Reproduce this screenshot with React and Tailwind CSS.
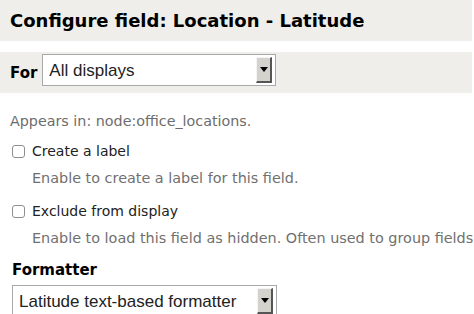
const SANS = { fontFamily: '"DejaVu Sans", Verdana, sans-serif' }

function SelectBox({ value, className }) {
  return (
    <div
      className={`flex items-center justify-between bg-white border border-[#a9a9a9] pl-[6px] pr-[3px] ${className}`}
    >
      <span className="text-[17px] text-[#222] font-['Liberation_Sans',Arial,sans-serif] leading-none">
        {value}
      </span>
      <span className="flex h-[26px] w-[16px] items-center justify-center bg-[#d4d2cd] border-t border-l border-t-[#f4f4f4] border-l-[#f4f4f4] border-r-2 border-b-2 border-r-[#555] border-b-[#555]">
        <span className="block w-0 h-0 border-l-[4px] border-r-[4px] border-t-[5px] border-l-transparent border-r-transparent border-t-black" />
      </span>
    </div>
  )
}

function Check({ label, help }) {
  return (
    <div>
      <div className="flex items-center h-[22px]">
        <span className="ml-[12px] mr-[7px] block w-[13px] h-[13px] rounded-[3px] border border-[#8f8f8f] bg-white" />
        <span className="text-[14px] text-[#222]">{label}</span>
      </div>
      <div className="pl-[32px] mt-[6px] text-[14.4px] text-[#707070] whitespace-nowrap">{help}</div>
    </div>
  )
}

export default function App() {
  return (
    <div className="w-[474px] h-[314px] overflow-hidden bg-white" style={SANS}>
      <div className="h-[41px] w-[472px] bg-[#efeeea] flex items-center px-[10px]">
        <h1 className="text-[18px] font-bold text-black">Configure field: Location - Latitude</h1>
      </div>
      <div className="mt-[11px] h-[41px] w-[472px] bg-[#efeeea] flex items-start pt-[2px] pl-[10px]">
        <span className="text-[15px] font-bold text-black mt-[8px] mr-[5px]">For</span>
        <SelectBox value="All displays" className="w-[234px] h-[32px]" />
      </div>
      <div className="px-[10px] mt-[18px] text-[14.3px] text-[#6d6d6d]">Appears in: node:office_locations.</div>
      <div className="mt-[8px]">
        <Check label="Create a label" help="Enable to create a label for this field." />
      </div>
      <div className="mt-[10px]">
        <Check label="Exclude from display" help="Enable to load this field as hidden. Often used to group fields." />
      </div>
      <div className="pl-[12px] mt-[9px] text-[15px] font-bold text-black">Formatter</div>
      <SelectBox value="Latitude text-based formatter" className="ml-[12px] mt-[4px] w-[265px] h-[32px]" />
    </div>
  )
}
